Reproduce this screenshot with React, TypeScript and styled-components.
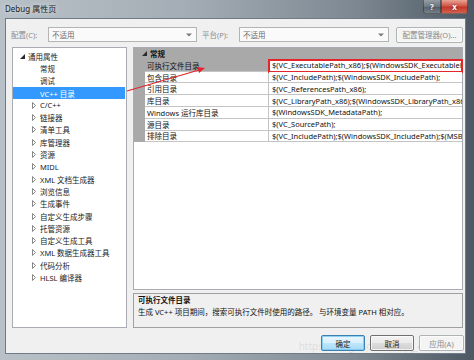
import React from 'react';
import styled, { createGlobalStyle } from 'styled-components';

const FONT = `"Noto Sans", "Noto Sans CJK SC", sans-serif`;

const GlobalStyle = createGlobalStyle`
  html, body { margin: 0; padding: 0; background: #5a6570; }
  body { font-family: ${FONT}; }
  * { box-sizing: border-box; }
`;

const Window = styled.div`
  position: relative;
  width: 474px;
  height: 360px;
  display: flex;
  flex-direction: column;
  padding: 0 8px 6px 5px;
  overflow: hidden;
  background: linear-gradient(90deg, #b9c1c8 0%, #a3acb4 40%, #7d8892 75%, #4c5863 100%);
`;

const TitleBar = styled.div`
  height: 18px;
  display: flex;
  align-items: flex-start;
  justify-content: space-between;
`;

const Title = styled.span`
  font-size: 8px;
  color: #1b1b1b;
  padding-top: 3px;
  text-shadow: 0 0 4px rgba(255, 255, 255, 0.8);
`;

const Caption = styled.div`
  display: flex;
  margin-right: -2px;
`;

const CaptionBtn = styled.div<{ $close?: boolean }>`
  width: ${p => (p.$close ? 27 : 18)}px;
  height: 14px;
  display: flex;
  align-items: center;
  justify-content: center;
  color: #fff;
  font-size: 8px;
  font-weight: bold;
  border: 1px solid rgba(40, 40, 40, 0.5);
  border-top: none;
  border-radius: ${p => (p.$close ? '0 0 3px 0' : '0 0 0 3px')};
  background: ${p =>
    p.$close
      ? 'linear-gradient(#e8a593, #d1574a 45%, #c2382a 55%, #d4604e)'
      : 'linear-gradient(rgba(255,255,255,0.35), rgba(255,255,255,0.1) 50%, rgba(0,0,0,0.1) 51%, rgba(255,255,255,0.15))'};
  text-shadow: 0 0 2px rgba(0, 0, 0, 0.6);
`;

const Client = styled.div`
  position: relative;
  flex: 1;
  background: #f0f0f0;
  border: 1px solid #6f7b86;
  display: flex;
  flex-direction: column;
`;

const TopRow = styled.div`
  display: flex;
  align-items: center;
  height: 15px;
  margin-top: 8px;
  padding-left: 5px;
`;

const FieldLabel = styled.span`
  width: 37px;
  font-size: 7.5px;
  color: #8d8d8d;
`;

const Combo = styled.div<{ $w: number }>`
  width: ${p => p.$w}px;
  height: 15px;
  background: #fafafa;
  border: 1px solid #b4b4b4;
  display: flex;
  align-items: center;
  justify-content: space-between;
  padding: 0 4px 0 3px;
  font-size: 7.5px;
  color: #6d6d6d;
  margin-right: 5px;
`;

const Btn = styled.div<{ $kind: 'default' | 'normal' | 'disabled'; $w: number }>`
  position: relative;
  width: ${p => p.$w}px;
  height: 16px;
  display: flex;
  align-items: center;
  justify-content: center;
  font-size: 7.5px;
  border-radius: 2px;
  color: ${p => (p.$kind === 'disabled' ? '#8a8a8a' : '#1b1b1b')};
  border: 1px solid
    ${p => (p.$kind === 'default' ? '#3c7fb1' : p.$kind === 'normal' ? '#707070' : '#adb2b5')};
  background: ${p =>
    p.$kind === 'default'
      ? 'linear-gradient(#eaf6fd, #d9f0fc 50%, #bee6fd 51%, #a7d9f5)'
      : p.$kind === 'normal'
      ? 'linear-gradient(#f2f2f2, #ebebeb 50%, #dddddd 51%, #cfcfcf)'
      : '#f4f4f4'};
  box-shadow: ${p =>
    p.$kind === 'default' ? 'inset 0 0 0 1px rgba(120, 200, 240, 0.8)' : 'inset 0 0 0 1px rgba(255,255,255,0.7)'};
`;

const Main = styled.div`
  display: grid;
  grid-template-columns: 115px 330px;
  grid-template-rows: 243px 35px;
  column-gap: 6px;
  row-gap: 3px;
  margin-top: 5px;
  padding-left: 6px;
`;

const Tree = styled.div`
  grid-row: 1 / span 2;
  background: #fff;
  border: 1px solid #a9acb3;
  padding-top: 2px;
  display: flex;
  flex-direction: column;
`;

const TreeRow = styled.div<{ $level: number; $selected?: boolean }>`
  height: 12.3px;
  display: flex;
  align-items: center;
  padding-left: ${p => (p.$level === 0 ? 5 : 17)}px;
  margin-right: 1px;
  background: ${p => (p.$selected ? '#3399ff' : 'transparent')};
  color: ${p => (p.$selected ? '#fff' : '#1a1a1a')};
  font-size: 7.5px;
  white-space: nowrap;
`;

const Expander = styled.span`
  width: 10px;
  display: flex;
  align-items: center;
  padding-left: 2px;
`;

const PropGrid = styled.div`
  background: #fff;
  border: 1px solid #a9acb3;
  display: flex;
  flex-direction: column;
`;

const CategoryRow = styled.div`
  height: 11.8px;
  display: flex;
  align-items: center;
  background: #a9a9a9;
  padding-left: 6px;
  font-size: 7.5px;
  font-weight: bold;
  color: #111;
`;

const PropRow = styled.div`
  height: 11.8px;
  display: grid;
  grid-template-columns: 11px 124px 1fr;
  font-size: 7.5px;
  color: #111;
`;

const Margin = styled.div`
  background: #a9a9a9;
`;

const NameCell = styled.div<{ $selected?: boolean }>`
  background: ${p => (p.$selected ? '#a9a9a9' : '#fff')};
  border-right: 1px solid #c4c4c4;
  border-bottom: 1px solid #c4c4c4;
  padding-left: 2px;
  display: flex;
  align-items: center;
  white-space: nowrap;
  overflow: hidden;
`;

const ValueCell = styled.div<{ $marked?: boolean }>`
  background: #fff;
  border-bottom: 1px solid #c4c4c4;
  padding-left: 3px;
  display: flex;
  align-items: center;
  white-space: nowrap;
  overflow: hidden;
  outline: ${p => (p.$marked ? '2px solid #e3262b' : 'none')};
  outline-offset: -1px;
  position: relative;
`;

const Desc = styled.div`
  background: #f0f0f0;
  border: 1px solid #a0a0a0;
  padding: 1px 4px;
  font-size: 7.5px;
  color: #111;
  display: flex;
  flex-direction: column;
  gap: 1px;
`;

const DescTitle = styled.div`
  font-weight: bold;
  line-height: 11px;
`;

const DescText = styled.div`
  line-height: 11px;
`;

const ButtonRow = styled.div`
  display: flex;
  justify-content: flex-end;
  gap: 5px;
  margin-top: 7px;
  padding-right: 1px;
`;

const Watermark = styled.div`
  position: absolute;
  right: 2px;
  bottom: 0px;
  font-size: 10px;
  color: rgba(160, 160, 160, 0.25);
  white-space: nowrap;
`;

const Overlay = styled.svg`
  position: absolute;
  left: 0;
  top: 0;
  pointer-events: none;
`;

const Filled = () => (
  <svg width="5" height="5" viewBox="0 0 5 5">
    <polygon points="5,0 5,5 0,5" fill="#2a2a2a" />
  </svg>
);

const Hollow = () => (
  <svg width="4" height="7" viewBox="0 0 4 7">
    <polygon points="0.5,0.5 3.5,3.5 0.5,6.5" fill="none" stroke="#7a7a7a" strokeWidth="0.9" />
  </svg>
);

const Arrow = () => (
  <svg width="6" height="4" viewBox="0 0 6 4">
    <polygon points="0,0.5 6,0.5 3,3.5" fill="#7a7a7a" />
  </svg>
);

type Node = { label: string; level: 0 | 1; kind: 'open' | 'closed' | 'leaf'; selected?: boolean };

const nodes: Node[] = [
  { label: '通用属性', level: 0, kind: 'open' },
  { label: '常规', level: 1, kind: 'leaf' },
  { label: '调试', level: 1, kind: 'leaf' },
  { label: 'VC++ 目录', level: 1, kind: 'leaf', selected: true },
  { label: 'C/C++', level: 1, kind: 'closed' },
  { label: '链接器', level: 1, kind: 'closed' },
  { label: '清单工具', level: 1, kind: 'closed' },
  { label: '库管理器', level: 1, kind: 'closed' },
  { label: '资源', level: 1, kind: 'closed' },
  { label: 'MIDL', level: 1, kind: 'closed' },
  { label: 'XML 文档生成器', level: 1, kind: 'closed' },
  { label: '浏览信息', level: 1, kind: 'closed' },
  { label: '生成事件', level: 1, kind: 'closed' },
  { label: '自定义生成步骤', level: 1, kind: 'closed' },
  { label: '托管资源', level: 1, kind: 'closed' },
  { label: '自定义生成工具', level: 1, kind: 'closed' },
  { label: 'XML 数据生成器工具', level: 1, kind: 'closed' },
  { label: '代码分析', level: 1, kind: 'closed' },
  { label: 'HLSL 编译器', level: 1, kind: 'closed' },
];

const props = [
  ['可执行文件目录', '$(VC_ExecutablePath_x86);$(WindowsSDK_ExecutablePath);$(VS_ExecutablePath)'],
  ['包含目录', '$(VC_IncludePath);$(WindowsSDK_IncludePath);'],
  ['引用目录', '$(VC_ReferencesPath_x86);'],
  ['库目录', '$(VC_LibraryPath_x86);$(WindowsSDK_LibraryPath_x86);$(NETFXKitsDir)'],
  ['Windows 运行库目录', '$(WindowsSDK_MetadataPath);'],
  ['源目录', '$(VC_SourcePath);'],
  ['排除目录', '$(VC_IncludePath);$(WindowsSDK_IncludePath);$(MSBuild_ExecutablePath)'],
];

export default function App() {
  return (
    <>
      <GlobalStyle />
      <Window>
        <TitleBar>
          <Title>Debug 属性页</Title>
          <Caption>
            <CaptionBtn>?</CaptionBtn>
            <CaptionBtn $close>x</CaptionBtn>
          </Caption>
        </TitleBar>
        <Client>
          <TopRow>
            <FieldLabel>配置(C):</FieldLabel>
            <Combo $w={149}>
              <span>不适用</span>
              <Arrow />
            </Combo>
            <FieldLabel>平台(P):</FieldLabel>
            <Combo $w={150} style={{ marginRight: 7 }}>
              <span>不适用</span>
              <Arrow />
            </Combo>
            <Btn $kind="disabled" $w={67}>配置管理器(O)...</Btn>
          </TopRow>
          <Main>
            <Tree>
              {nodes.map(n => (
                <TreeRow key={n.label} $level={n.level} $selected={n.selected}>
                  <Expander>{n.kind === 'open' ? <Filled /> : n.kind === 'closed' ? <Hollow /> : null}</Expander>
                  {n.label}
                </TreeRow>
              ))}
            </Tree>
            <PropGrid>
              <CategoryRow>
                <Expander>
                  <Filled />
                </Expander>
                常规
              </CategoryRow>
              {props.map(([name, value], i) => (
                <PropRow key={name}>
                  <Margin />
                  <NameCell $selected={i === 0}>{name}</NameCell>
                  <ValueCell $marked={i === 0}>{value}</ValueCell>
                </PropRow>
              ))}
            </PropGrid>
            <Desc>
              <DescTitle>可执行文件目录</DescTitle>
              <DescText>生成 VC++ 项目期间，搜索可执行文件时使用的路径。 与环境变量 PATH 相对应。</DescText>
            </Desc>
          </Main>
          <Watermark>https://blog.csdn.net/qq_41023743</Watermark>
          <ButtonRow>
            <Btn $kind="default" $w={44}>确定</Btn>
            <Btn $kind="normal" $w={44}>取消</Btn>
            <Btn $kind="disabled" $w={45}>应用(A)</Btn>
          </ButtonRow>
        </Client>
        <Overlay width="474" height="360" viewBox="0 0 474 360">
          <line x1="127" y1="91" x2="199" y2="70" stroke="#e3262b" strokeWidth="1.3" />
          <polygon points="205,68 199.1,72.9 197.4,67.1" fill="#e3262b" />
        </Overlay>
      </Window>
    </>
  );
}
